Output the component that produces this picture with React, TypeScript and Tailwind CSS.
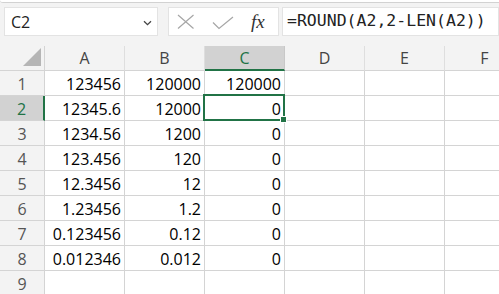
import React from 'react';

const colA = ['123456', '12345.6', '1234.56', '123.456', '12.3456', '1.23456', '0.123456', '0.012346', ''];
const colB = ['120000', '12000', '1200', '120', '12', '1.2', '0.12', '0.012', ''];
const colC = ['120000', '0', '0', '0', '0', '0', '0', '0', ''];
const letters = ['A', 'B', 'C', 'D', 'E', 'F'];

function Toolbar(): JSX.Element {
  return (
    <div className="flex items-stretch h-[29px] mt-[4px]">
      <div className="ml-[4px] w-[154px] bg-white border border-[#e3e3e3] flex items-center justify-between pl-[6px] pr-[5px]">
        <span className="text-[16px] text-[#222]">C2</span>
        <svg width="9" height="6" viewBox="0 0 9 6" className="mt-[2px]">
          <path d="M1 1.2 L4.5 4.6 L8 1.2" fill="none" stroke="#444" strokeWidth="1.3" />
        </svg>
      </div>
      <div className="ml-[10px] w-[111px] bg-white border border-[#e3e3e3] flex items-center">
        <svg width="18" height="16" viewBox="0 0 18 16" className="ml-[8px]">
          <path d="M1 1 L16.5 14.5 M16.5 1 L1 14.5" fill="none" stroke="#a6a6a6" strokeWidth="1.2" />
        </svg>
        <svg width="22" height="14" viewBox="0 0 22 14" className="ml-[17px] mt-[2px]">
          <path d="M1 6.5 L7 12.5 L21 1" fill="none" stroke="#a6a6a6" strokeWidth="1.2" />
        </svg>
        <span
          className="ml-[17px] text-[19px] italic text-[#333] leading-none"
          style={{ fontFamily: '"Liberation Serif", serif' }}
        >
          fx
        </span>
      </div>
      <div className="ml-[3px] flex-1 bg-white border border-[#e3e3e3] flex items-center pl-[4px]">
        <span
          className="text-[16.5px] text-[#222] whitespace-nowrap"
          style={{ fontFamily: '"DejaVu Sans Mono", monospace' }}
        >
          =ROUND(A2,2-LEN(A2))
        </span>
      </div>
    </div>
  );
}

function Cell({ value, selected }: { value: string; selected?: boolean }): JSX.Element {
  return (
    <div
      className={
        'h-[25px] bg-white border-r border-b border-[#d4d4d4] flex items-end justify-end pr-[3px] pb-[3px] text-[16px] text-black leading-none' +
        (selected ? ' relative' : '')
      }
    >
      {value}
      {selected && (
        <div className="absolute -left-[2px] -top-[2px] w-[82px] h-[27px] border-2 border-[#217346]">
          <div className="absolute -right-[4px] -bottom-[4px] w-[7px] h-[7px] bg-[#217346] border border-white" />
        </div>
      )}
    </div>
  );
}

export default function App(): JSX.Element {
  return (
    <div
      className="w-[499px] h-[294px] overflow-hidden bg-[#f3f3f3]"
      style={{ fontFamily: '"Open Sans", "Liberation Sans", sans-serif' }}
    >
      <div className="h-[3px] bg-white border-b border-[#d2d2d2] rounded-bl-[5px]" />
      <Toolbar />
      <div className="mt-[10px] grid grid-cols-[45px_repeat(6,80px)]">
        <div className="h-[25px] border-r border-b border-[#d4d4d4] flex items-end justify-end pr-[3px] pb-[4px]">
          <svg width="18" height="18" viewBox="0 0 18 18">
            <path d="M18 0 L18 18 L0 18 Z" fill="#b5b5b5" />
          </svg>
        </div>
        {letters.map((l) => (
          <div
            key={l}
            className={
              l === 'C'
                ? 'h-[25px] bg-[#d2d2d2] border-r border-[#c8c8c8] border-b-2 border-b-[#217346] flex items-center justify-center text-[16px] text-[#217346]'
                : 'h-[25px] border-r border-r-[#dedede] border-b border-b-[#d4d4d4] flex items-center justify-center text-[16px] text-[#444]'
            }
          >
            {l}
          </div>
        ))}
        {colA.map((a, i) => (
          <React.Fragment key={i}>
            <div
              className={
                i === 1
                  ? 'h-[25px] bg-[#d2d2d2] border-r-2 border-r-[#217346] border-b border-b-[#d4d4d4] flex items-center justify-center pt-[2px] text-[16px] text-[#217346]'
                  : 'h-[25px] border-r border-b border-[#d4d4d4] flex items-center justify-center pt-[2px] text-[16px] text-[#555]'
              }
            >
              {i + 1}
            </div>
            <Cell value={a} />
            <Cell value={colB[i]} />
            <Cell value={colC[i]} selected={i === 1} />
            <Cell value="" />
            <Cell value="" />
            <Cell value="" />
          </React.Fragment>
        ))}
      </div>
    </div>
  );
}
